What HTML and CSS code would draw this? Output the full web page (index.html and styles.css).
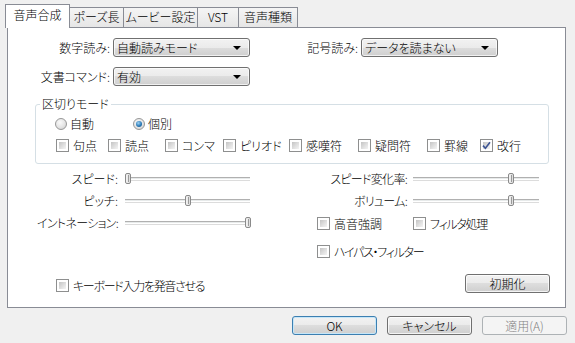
FILE: index.html
```html
<!DOCTYPE html>
<html lang="ja">
<head>
<meta charset="utf-8">
<link rel="stylesheet" href="styles.css">
</head>
<body>
<div class="dialog">
  <div class="tabs">
    <div class="tab active">音声合成</div>
    <div class="tab w-pause">ポーズ長</div>
    <div class="tab w-movie">ムービー設定</div>
    <div class="tab w-vst">VST</div>
    <div class="tab w-kind">音声種類</div>
  </div>
  <div class="panel">
    <div class="form-row first">
      <span class="lbl">数字読み:</span>
      <div class="combo"><span>自動読みモード</span><i class="arrow"></i></div>
      <span class="lbl">記号読み:</span>
      <div class="combo"><span>データを読まない</span><i class="arrow"></i></div>
    </div>
    <div class="form-row">
      <span class="lbl">文書コマンド:</span>
      <div class="combo"><span>有効</span><i class="arrow"></i></div>
    </div>
    <fieldset class="group">
      <legend>区切りモード</legend>
      <div class="radios">
        <label class="opt r-auto"><span class="radio"></span>自動</label>
        <label class="opt"><span class="radio on"></span>個別</label>
      </div>
      <div class="checks">
        <label class="opt"><span class="cb"></span>句点</label>
        <label class="opt"><span class="cb"></span>読点</label>
        <label class="opt"><span class="cb"></span>コンマ</label>
        <label class="opt"><span class="cb"></span>ピリオド</label>
        <label class="opt"><span class="cb"></span>感嘆符</label>
        <label class="opt"><span class="cb"></span>疑問符</label>
        <label class="opt"><span class="cb"></span>罫線</label>
        <label class="opt"><span class="cb checked"><svg width="9" height="9" viewBox="0 0 9 9"><path d="M1 4.6 L3.4 7.2 L8 1.2" fill="none" stroke="#3d5493" stroke-width="1.6"/></svg></span>改行</label>
      </div>
    </fieldset>
    <div class="mid">
      <div class="col-left">
        <div class="srow"><span class="slbl">スピード:</span><div class="track"><i class="thumb" style="left:0px"></i></div></div>
        <div class="srow"><span class="slbl">ピッチ:</span><div class="track"><i class="thumb" style="left:60px"></i></div></div>
        <div class="srow"><span class="slbl tight">イントネーション:</span><div class="track"><i class="thumb" style="left:120px"></i></div></div>
      </div>
      <div class="col-right">
        <div class="srow"><span class="slbl tight">スピード変化率:</span><div class="track"><i class="thumb" style="left:95px"></i></div></div>
        <div class="srow"><span class="slbl tight">ボリューム:</span><div class="track"><i class="thumb" style="left:95px"></i></div></div>
        <div class="rchecks">
          <label class="opt w-high"><span class="cb"></span>高音強調</label>
          <label class="opt tighter"><span class="cb"></span>フィルタ処理</label>
        </div>
        <div class="rchecks second">
          <label class="opt tighter"><span class="cb"></span>ハイパス・フィルター</label>
        </div>
      </div>
    </div>
    <div class="bottom">
      <label class="opt kb tighter"><span class="cb"></span>キーボード入力を発音させる</label>
      <button class="btn init">初期化</button>
    </div>
  </div>
  <div class="actions">
    <button class="btn default">OK</button>
    <button class="btn">キャンセル</button>
    <button class="btn disabled">適用(A)</button>
  </div>
</div>
</body>
</html>
```
FILE: styles.css
```css
* { box-sizing: border-box; }
html, body { margin: 0; padding: 0; }
body {
  font-family: "Noto Sans CJK JP", "Noto Sans", sans-serif;
  font-size: 12px;
  font-weight: 300;
  font-feature-settings: "palt";
  color: #000;
  background: #f0f0f0;
}
.dialog {
  width: 575px;
  height: 343px;
  padding-top: 4px;
  background: #f0f0f0;
  overflow: hidden;
}
.tabs {
  display: flex;
  align-items: flex-end;
  height: 23px;
  padding-left: 5px;
}
.tab {
  height: 20px;
  line-height: 18px;
  text-align: center;
  border: 1px solid #898c95;
  border-bottom: none;
  margin-left: -1px;
  background: linear-gradient(#f5f5f5, #e6e6e6);
  white-space: nowrap;
}
.tab.active {
  margin-left: 0;
  width: 65px;
  height: 24px;
  line-height: 20px;
  margin-bottom: -1px;
  background: #fff;
  position: relative;
  z-index: 1;
}
.w-pause { width: 55px; }
.w-movie { width: 75px; }
.w-vst { width: 42px; }
.w-kind { width: 60px; }

.panel {
  margin-left: 7px;
  width: 559px;
  height: 281px;
  border: 1px solid #898c95;
  background: #fff;
}
.form-row {
  display: grid;
  grid-template-columns: 102px 137px 105px 137px;
  column-gap: 3px;
  align-items: center;
  margin-top: 10px;
  height: 19px;
}
.lbl { text-align: right; white-space: nowrap; line-height: 19px; }
.combo {
  height: 19px;
  border: 1px solid #707070;
  border-radius: 3px;
  background: linear-gradient(#f2f2f2 0%, #ebebeb 50%, #dddddd 50%, #cfcfcf 100%);
  display: flex;
  align-items: center;
  justify-content: space-between;
  padding: 0 8px 0 3px;
  line-height: 17px;
  box-shadow: inset 0 0 0 1px rgba(255,255,255,0.7);
}
.arrow {
  width: 0; height: 0;
  border-left: 4px solid transparent;
  border-right: 4px solid transparent;
  border-top: 4px solid #000;
  margin-top: 1px;
}

.group {
  margin: 11px 0 0 27px;
  width: 514px;
  padding: 0 0 11px 0;
  border: 1px solid #d5dfe5;
  border-radius: 3px;
  min-inline-size: 0;
}
.group legend {
  margin-left: 4px;
  padding: 0 2px;
  line-height: 14px;
  height: 14px;
}
.opt {
  display: flex;
  align-items: center;
  gap: 3px;
  height: 13px;
  line-height: 13px;
  white-space: nowrap;
}
.tight { letter-spacing: -0.7px; }
.tighter { letter-spacing: -1.3px; }
.radios {
  display: flex;
  margin-top: 6px;
  padding-left: 19px;
  height: 13px;
}
.r-auto { width: 78px; }
.radio {
  width: 12px; height: 12px;
  border-radius: 50%;
  border: 1px solid #979797;
  background: radial-gradient(circle at 40% 35%, #fafafa 0%, #e4e4e4 55%, #c9c9c9 100%);
  display: flex;
  align-items: center;
  justify-content: center;
  flex: none;
}
.radio.on::before {
  content: "";
  width: 6px; height: 6px;
  border-radius: 50%;
  background: radial-gradient(circle at 40% 35%, #9fd3f4 0%, #2c7bb8 55%, #104b7c 100%);
}
.checks {
  display: grid;
  grid-template-columns: 52px 57px 58px 66px 69px 69px 53px auto;
  margin-top: 9px;
  padding-left: 20px;
  height: 13px;
}
.cb {
  width: 13px; height: 13px;
  flex: none;
  border: 1px solid #8e8f8f;
  background: #fff;
  display: flex;
  align-items: center;
  justify-content: center;
  position: relative;
  letter-spacing: 0;
  margin-right: 1px;
}
.cb::before {
  content: "";
  position: absolute;
  inset: 2px;
  background: linear-gradient(135deg, #c4c4c4 0%, #e2e2e2 60%, #f4f4f4 100%);
}
.cb svg { position: relative; z-index: 1; }

.mid {
  display: flex;
  margin-top: 3px;
}
.col-left { width: 242px; }
.col-right { margin-left: 10px; }
.srow {
  display: flex;
  align-items: center;
  height: 22px;
}
.col-left .slbl { width: 110px; margin-right: 7px; }
.col-right .slbl { width: 147px; margin-right: 6px; }
.slbl { text-align: right; white-space: nowrap; }
.track {
  position: relative;
  width: 125px;
  height: 3px;
  background: #e7eaea;
  border-top: 1px solid #b0b0b0;
  border-bottom: 1px solid #fff;
  box-shadow: 0 1px 0 #dcdcdc;
}
.col-right .track { width: 126px; }
.thumb {
  position: absolute;
  top: -5px;
  width: 6px;
  height: 11px;
  border: 1px solid #8a8a8a;
  border-radius: 2px;
  background: linear-gradient(90deg, #f4f4f4, #dcdcdc);
}
.thumb::after {
  content: "";
  position: absolute;
  left: 2px; top: 1px;
  width: 1px; height: 7px;
  background: #9a9a9a;
}
.rchecks {
  display: flex;
  margin-top: 6px;
  padding-left: 57px;
}
.rchecks.second { margin-top: 15px; }
.w-high { width: 96px; }

.bottom {
  display: flex;
  align-items: flex-end;
  margin-top: 16px;
  padding-left: 48px;
  height: 19px;
}
.kb { margin-bottom: 1px; }
.btn {
  font-family: inherit;
  font-size: 12px;
  font-weight: 300;
  font-feature-settings: "palt";
  color: #000;
  width: 85px;
  height: 19px;
  padding: 0;
  line-height: 17px;
  border: 1px solid #707070;
  border-radius: 3px;
  background: linear-gradient(#f2f2f2 0%, #ebebeb 50%, #dddddd 50%, #cfcfcf 100%);
  box-shadow: inset 0 0 0 1px rgba(255,255,255,0.75);
}
.init { margin-left: auto; margin-right: 15px; }
.actions {
  display: flex;
  justify-content: flex-end;
  gap: 10px;
  margin-top: 8px;
  padding-right: 8px;
}
.btn.default {
  border-color: #3c7fb1;
  box-shadow: inset 0 0 0 1px #c6e6f8;
}
.btn.disabled {
  color: #838383;
  border-color: #adb2b5;
  background: #f4f4f4;
  box-shadow: none;
}
```
